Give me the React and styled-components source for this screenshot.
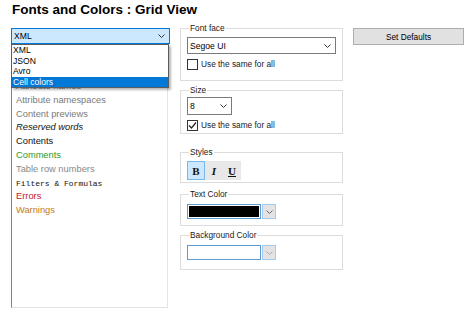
import React from "react";
import styled, { createGlobalStyle } from "styled-components";

const GlobalStyle = createGlobalStyle`
  html, body {
    margin: 0;
    padding: 0;
    background: #fff;
  }
  body {
    font-family: "Liberation Sans", Arial, sans-serif;
    overflow: hidden;
  }
`;

const Page = styled.div`
  width: 474px;
  height: 328px;
  box-sizing: border-box;
  padding: 0 10px 0 11px;
`;

const Title = styled.h1`
  margin: 0;
  height: 23px;
  box-sizing: border-box;
  padding: 2px 0 0 1px;
  font-size: 13.5px;
  line-height: 16px;
  font-weight: bold;
  color: #000;
`;

const Main = styled.div`
  display: grid;
  grid-template-columns: 159px 163px 111px;
  column-gap: 10px;
  align-items: start;
`;

const LeftColumn = styled.div`
  position: relative;
  margin-top: 5px;
`;

const Combo = styled.div`
  height: ${(p) => p.$height || 16}px;
  box-sizing: border-box;
  border: 1px solid ${(p) => (p.$focused ? "#0078d7" : "#7a7a7a")};
  background: ${(p) => (p.$focused ? "#cce8ff" : "#fff")};
  width: ${(p) => p.$width || "100%"};
  display: flex;
  align-items: center;
  justify-content: space-between;
  padding: 0 4px 0 2px;
  font-size: 8.6px;
  color: #000;
`;

const Chevron = ({ color = "#333" }) => (
  <svg width="7" height="4" viewBox="0 0 7 4">
    <polyline points="0.5,0.5 3.5,3.5 6.5,0.5" fill="none" stroke={color} strokeWidth="1" />
  </svg>
);

const Dropdown = styled.div`
  position: absolute;
  top: 16px;
  left: 0;
  width: 158px;
  box-sizing: border-box;
  border: 1px solid #5c5c5c;
  background: #fff;
  box-shadow: 2px 2px 2px rgba(0, 0, 0, 0.28);
  z-index: 2;
`;

const Option = styled.div`
  height: 10.5px;
  line-height: 10.5px;
  padding-left: 1px;
  font-size: 8.6px;
  color: ${(p) => (p.$selected ? "#fff" : "#000")};
  background: ${(p) => (p.$selected ? "#0078d7" : "transparent")};
`;

const List = styled.div`
  margin-top: 2px;
  width: 157px;
  height: 262px;
  box-sizing: border-box;
  border: 1px solid #e3e3e3;
  border-left: 1px solid #828282;
  padding: 33px 0 0 4px;
  overflow: hidden;
`;

const Item = styled.div`
  height: 13.8px;
  line-height: 13.8px;
  white-space: nowrap;
  font-size: ${(p) => (p.$mono ? "8px" : "9.3px")};
  font-family: ${(p) => (p.$mono ? '"Liberation Mono", monospace' : '"Liberation Sans", Arial, sans-serif')};
  font-style: ${(p) => (p.$italic ? "italic" : "normal")};
  color: ${(p) => p.$color};
`;

const MiddleColumn = styled.div`
  display: flex;
  flex-direction: column;
`;

const Group = styled.fieldset`
  margin: ${(p) => p.$mt || 0}px 0 0 0;
  min-width: 0;
  border: 1px solid #dcdcdc;
  padding: ${(p) => p.$pt}px 6px ${(p) => p.$pb}px 6px;
  display: flex;
  flex-direction: column;
  align-items: flex-start;
  gap: 5px;
`;

const Legend = styled.legend`
  margin-left: 2px;
  padding: 0 1px;
  font-size: 8.3px;
  line-height: 10px;
  color: #1a1a1a;
`;

const CheckRow = styled.label`
  display: flex;
  align-items: center;
  gap: 3px;
  font-size: 8.3px;
  line-height: 11px;
  color: #1a1a1a;
`;

const Box = styled.span`
  width: 11px;
  height: 11px;
  box-sizing: border-box;
  border: 1px solid #333;
  background: #fff;
  display: flex;
  align-items: center;
  justify-content: center;
`;

const Checkbox = ({ checked }) => (
  <Box>
    {checked && (
      <svg width="9" height="9" viewBox="0 0 9 9">
        <polyline points="1,4.5 3.5,7 8,1.5" fill="none" stroke="#222" strokeWidth="1.2" />
      </svg>
    )}
  </Box>
);

const Toolbar = styled.div`
  display: flex;
  background: #e8e8e8;
`;

const StyleButton = styled.div`
  width: 18px;
  height: 19px;
  box-sizing: border-box;
  border: 1px solid ${(p) => (p.$active ? "#7ab8e8" : "transparent")};
  background: ${(p) => (p.$active ? "#cce8ff" : "#e8e8e8")};
  display: flex;
  align-items: center;
  justify-content: center;
  font-family: "Liberation Serif", "Times New Roman", serif;
  font-weight: bold;
  font-size: 11px;
  font-style: ${(p) => (p.$italic ? "italic" : "normal")};
  text-decoration: ${(p) => (p.$underline ? "underline" : "none")};
  color: #111;
`;

const ColorCombo = styled.div`
  display: flex;
  gap: 1px;
  height: 15px;
`;

const Swatch = styled.div`
  width: 74px;
  box-sizing: border-box;
  border: 1px solid #5d9ad6;
  background: ${(p) => p.$color};
  box-shadow: inset 0 0 0 1px #fff;
`;

const DropButton = styled.div`
  width: 14px;
  box-sizing: border-box;
  border: 1px solid #a9c9ea;
  background: #e3e3e3;
  display: flex;
  align-items: center;
  justify-content: center;
`;

const RightColumn = styled.div`
  margin-top: 5px;
`;

const Button = styled.div`
  height: 17px;
  box-sizing: border-box;
  border: 1px solid #adadad;
  background: #e1e1e1;
  display: flex;
  align-items: center;
  justify-content: center;
  font-size: 8.3px;
  color: #000;
`;

const items = [
  { text: "Attribute names", color: "#7a7a7a" },
  { text: "Attribute namespaces", color: "#7a7a7a" },
  { text: "Content previews", color: "#7a7a7a" },
  { text: "Reserved words", color: "#111", italic: true },
  { text: "Contents", color: "#111" },
  { text: "Comments", color: "#2e9a2e" },
  { text: "Table row numbers", color: "#8a8a8a" },
  { text: "Filters & Formulas", color: "#111", mono: true },
  { text: "Errors", color: "#c0202c" },
  { text: "Warnings", color: "#c47a1c" },
];

const options = ["XML", "JSON", "Avro", "Cell colors"];

export default function App() {
  return (
    <Page>
      <GlobalStyle />
      <Title>Fonts and Colors : Grid View</Title>
      <Main>
        <LeftColumn>
          <Combo $focused>
            <span>XML</span>
            <Chevron />
          </Combo>
          <Dropdown>
            {options.map((o) => (
              <Option key={o} $selected={o === "Cell colors"}>
                {o}
              </Option>
            ))}
          </Dropdown>
          <List>
            {items.map((it) => (
              <Item key={it.text} $color={it.color} $italic={it.italic} $mono={it.mono}>
                {it.text}
              </Item>
            ))}
          </List>
        </LeftColumn>

        <MiddleColumn>
          <Group $pt={4} $pb={10}>
            <Legend>Font face</Legend>
            <Combo $width="149px" $height={17}>
              <span>Segoe UI</span>
              <Chevron />
            </Combo>
            <CheckRow>
              <Checkbox />
              Use the same for all
            </CheckRow>
          </Group>
          <Group $mt={4} $pt={2} $pb={2}>
            <Legend>Size</Legend>
            <Combo $width="45px" $height={18}>
              <span>8</span>
              <Chevron />
            </Combo>
            <CheckRow>
              <Checkbox checked />
              Use the same for all
            </CheckRow>
          </Group>
          <Group $mt={13} $pt={4} $pb={2}>
            <Legend>Styles</Legend>
            <Toolbar>
              <StyleButton $active>B</StyleButton>
              <StyleButton $italic>I</StyleButton>
              <StyleButton $underline>U</StyleButton>
            </Toolbar>
          </Group>
          <Group $mt={6} $pt={5} $pb={6}>
            <Legend>Text Color</Legend>
            <ColorCombo>
              <Swatch $color="#000" />
              <DropButton>
                <Chevron color="#666" />
              </DropButton>
            </ColorCombo>
          </Group>
          <Group $mt={4} $pt={5} $pb={9}>
            <Legend>Background Color</Legend>
            <ColorCombo>
              <Swatch $color="#fff" />
              <DropButton>
                <Chevron color="#aaa" />
              </DropButton>
            </ColorCombo>
          </Group>
        </MiddleColumn>

        <RightColumn>
          <Button>Set Defaults</Button>
        </RightColumn>
      </Main>
    </Page>
  );
}
